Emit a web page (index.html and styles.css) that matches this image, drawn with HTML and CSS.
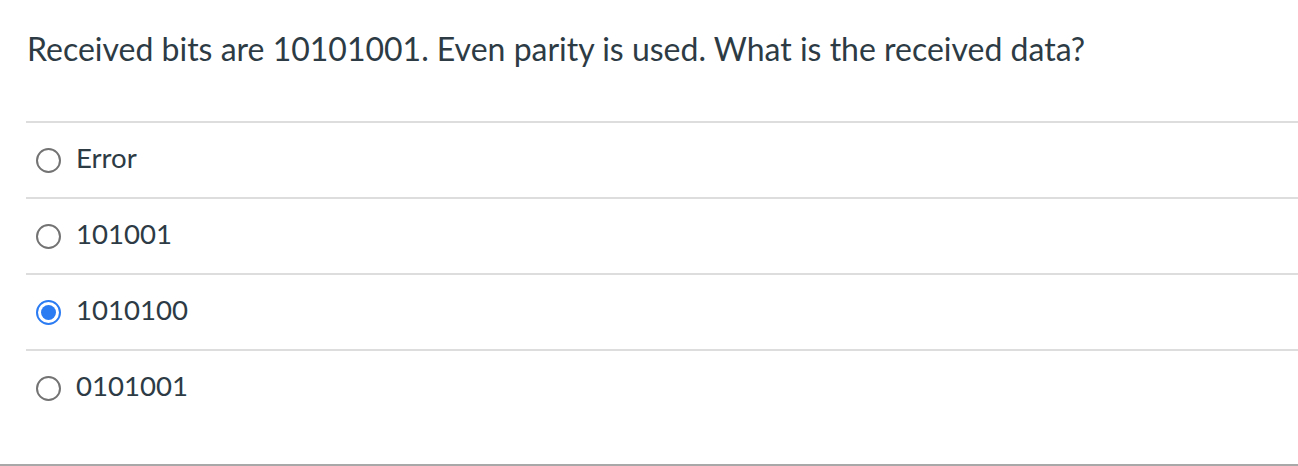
FILE: index.html
```html
<!DOCTYPE html>
<html>
<head>
<meta charset="utf-8">
<link rel="stylesheet" href="styles.css">
</head>
<body>
<div class="quiz">
  <div class="question">Received bits are 10101001. Even parity is used. What is the received data?</div>
  <div class="answers">
    <label class="answer"><span class="radio"></span><span class="label">Error</span></label>
    <label class="answer"><span class="radio"></span><span class="label">101001</span></label>
    <label class="answer"><span class="radio checked"></span><span class="label">1010100</span></label>
    <label class="answer"><span class="radio"></span><span class="label">0101001</span></label>
  </div>
</div>
</body>
</html>
```

FILE: styles.css
```css
html, body {
  margin: 0;
  padding: 0;
  background: #ffffff;
}
body {
  font-family: Lato, "Liberation Sans", sans-serif;
  color: #2d3b45;
}
.quiz {
  height: 466px;
  box-sizing: border-box;
  border-bottom: 2px solid #a8a8a8;
  display: flex;
  flex-direction: column;
}
.question {
  font-size: 32px;
  line-height: 38px;
  padding: 30px 0 0 27px;
  height: 91px;
}
.answers {
  margin-left: 26px;
  display: flex;
  flex-direction: column;
}
.answer {
  display: flex;
  align-items: center;
  height: 76px;
  box-sizing: border-box;
  border-top: 2px solid #dddddd;
  padding-left: 10px;
}
.radio {
  width: 25px;
  height: 25px;
  box-sizing: border-box;
  border: 2px solid #737373;
  border-radius: 50%;
  margin-right: 15px;
  flex: none;
  display: flex;
  align-items: center;
  justify-content: center;
}
.radio.checked {
  border: 2px solid #2b7bf3;
}
.radio.checked::after {
  content: "";
  width: 15px;
  height: 15px;
  border-radius: 50%;
  background: #2b7bf3;
}
.label {
  font-size: 27.6px;
  line-height: 32px;
  margin-top: -4px;
}
```
